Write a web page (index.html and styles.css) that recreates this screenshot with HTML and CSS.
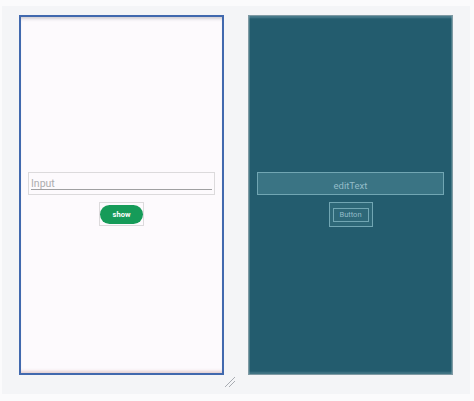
FILE: index.html
```html
<!DOCTYPE html>
<html lang="en">
<head>
<meta charset="utf-8">
<title>Layout editor</title>
<link rel="stylesheet" href="styles.css">
</head>
<body>
<div class="canvas">
  <div class="screens">
    <section class="screen design">
      <div class="form">
        <div class="input-box">
          <span class="hint">Input</span>
          <span class="underline"></span>
        </div>
        <div class="btn-box">
          <span class="btn-show">show</span>
        </div>
      </div>
    </section>
    <section class="screen blueprint">
      <div class="form">
        <div class="bp-edit">editText</div>
        <div class="bp-btn-box">
          <span class="bp-btn">Button</span>
        </div>
      </div>
    </section>
  </div>
  <svg class="resize" width="12" height="12" viewBox="0 0 12 12">
    <line x1="1" y1="11" x2="11" y2="1" stroke="#a8acb2" stroke-width="1"/>
    <line x1="5" y1="11" x2="11" y2="5" stroke="#a8acb2" stroke-width="1"/>
  </svg>
</div>
</body>
</html>
```
FILE: styles.css
```css
* { box-sizing: border-box; }

html, body {
  margin: 0;
  padding: 0;
  background: #fbfbfc;
  font-family: Roboto, "Liberation Sans", sans-serif;
}

.canvas {
  position: relative;
  margin: 6px 4px 0 2px;
  height: 388px;
  background: #f4f5f7;
}

.screens {
  display: flex;
  gap: 24px;
  padding: 9px 0 0 17px;
}

.screen {
  width: 205px;
  height: 360px;
}

/* design surface */
.design {
  background: #fdfafd;
  border: 2px solid #4169ae;
  box-shadow: inset 0 4px 3px -2px rgba(80, 80, 90, 0.25),
              inset 0 -4px 3px -2px rgba(170, 110, 110, 0.3);
  padding-top: 155px;
}

.design .form {
  display: flex;
  flex-direction: column;
  align-items: center;
}

.input-box {
  position: relative;
  width: 187px;
  height: 23px;
  border: 1px solid #dcdadc;
}

.hint {
  position: absolute;
  left: 2px;
  top: 4px;
  font-size: 10.5px;
  color: #adadaf;
}

.underline {
  position: absolute;
  left: 2px;
  right: 2px;
  top: 16px;
  height: 1px;
  background: #a0a0a2;
}

.btn-box {
  margin-top: 7px;
  width: 45px;
  height: 24px;
  border: 1px solid #dcdadc;
  display: flex;
  align-items: center;
  justify-content: center;
}

.btn-show {
  display: flex;
  align-items: center;
  justify-content: center;
  width: 44px;
  height: 19px;
  border-radius: 10px;
  background: #169b59;
  color: #ffffff;
  font-size: 7.5px;
  font-weight: bold;
}

/* blueprint surface */
.blueprint {
  background: #235c6e;
  border: 1px solid #7f9aa4;
  box-shadow: inset 0 3px 2px -1px rgba(150, 190, 200, 0.35),
              inset 0 -3px 2px -1px rgba(130, 170, 180, 0.35),
              inset 1px 0 0 rgba(160, 190, 200, 0.3),
              inset -1px 0 0 rgba(160, 190, 200, 0.3);
  padding-top: 156px;
}

.blueprint .form {
  display: flex;
  flex-direction: column;
  align-items: center;
}

.bp-edit {
  width: 187px;
  height: 23px;
  background: #3a7484;
  border: 1px solid #71a6b3;
  color: #93bcc8;
  font-size: 9.5px;
  display: flex;
  align-items: flex-end;
  justify-content: center;
  padding-bottom: 3px;
}

.bp-btn-box {
  margin-top: 7px;
  width: 44px;
  height: 25px;
  border: 1px solid #71a6b3;
  background: #2e6878;
  display: flex;
  align-items: center;
  justify-content: center;
}

.bp-btn {
  width: 36px;
  height: 14px;
  border: 1px solid #71a6b3;
  color: #93bcc8;
  font-size: 7.5px;
  display: flex;
  align-items: center;
  justify-content: center;
}

.resize {
  position: absolute;
  left: 222px;
  top: 370px;
}
```
